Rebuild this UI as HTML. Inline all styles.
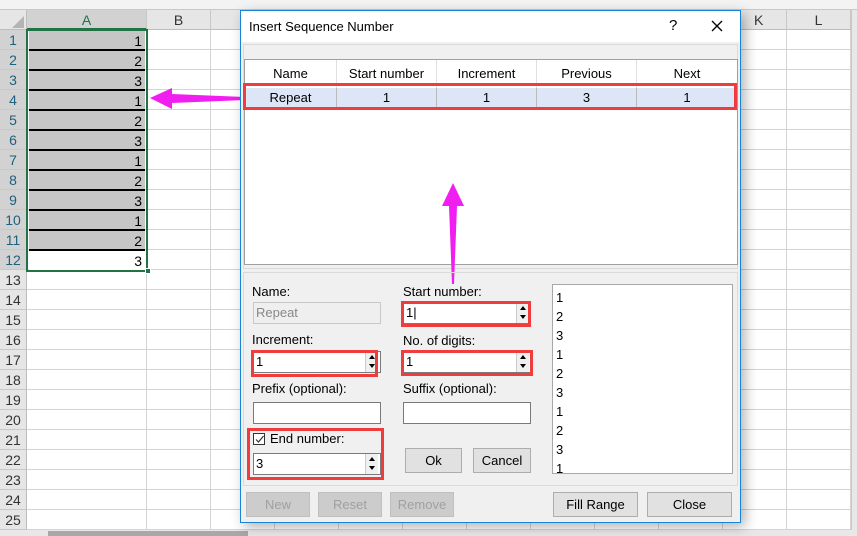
<!DOCTYPE html>
<html><head><meta charset="utf-8"><style>
*{margin:0;padding:0;box-sizing:border-box}
body{width:857px;height:536px;overflow:hidden;background:#fff;font-family:"Liberation Sans",sans-serif;font-size:13px;color:#000;position:relative}
.a{position:absolute}
.gh{left:27px;top:30px;width:830px;height:506px;background:repeating-linear-gradient(to bottom,transparent 0 19px,#d4d4d4 19px 20px)}
.gv{left:146px;top:10px;width:711px;height:526px;background:repeating-linear-gradient(to right,#d4d4d4 0 1px,transparent 1px 64px)}
.rh{left:0;width:27px;height:20px;background:#e6e6e6;border-bottom:1px solid #c8c8c8;border-right:1px solid #bdbdbd;text-align:center;line-height:20px;color:#333;font-size:14px}
.rh.s{background:#d2d2d2;color:#1f5f7f}
.cell{left:29px;width:116px;height:20px;background:#c6c6c6;border-bottom:2px solid #000;text-align:right;padding-right:3px;line-height:20px;font-size:14px}
.ch{top:10px;height:20px;background:#e6e6e6;border-right:1px solid #c8c8c8;border-bottom:1px solid #bdbdbd;text-align:center;line-height:20px;font-size:14px;color:#333}
.dlg{left:240px;top:10px;width:501px;height:513px;background:#f0f0f0;border:1px solid #1883d7;box-shadow:4px 4px 12px rgba(0,0,0,.3)}
.lbl{font-size:13px}
.inp{background:#fff;border:1px solid #7a7a7a;height:22px;font-size:13px;line-height:20px;padding-left:2px}
.spin{width:13px;height:20px;border-left:1px solid #ccc;background:#f0f0f0}
.spin:before{content:"";position:absolute;left:3px;top:3px;border-left:3.5px solid transparent;border-right:3.5px solid transparent;border-bottom:4px solid #000}
.spin:after{content:"";position:absolute;left:3px;top:12px;border-left:3.5px solid transparent;border-right:3.5px solid transparent;border-top:4px solid #000}
.red{border:3px solid #f03c3c}
.btn{background:#e1e1e1;border:1px solid #adadad;text-align:center;font-size:13px;height:25px;line-height:23px}
.dis{color:#a0a0a0;background:#cccccc;border-color:#bfbfbf}
.th{top:0;height:28px;line-height:28px;text-align:center;border-right:1px solid #e0e0e0}
.td{top:0;height:20px;line-height:20px;text-align:center;border-right:1px solid #bbb}
</style></head><body>
<div class="a" style="left:0;top:0;width:857px;height:10px;background:#f3f3f3;border-bottom:1px solid #c8c8c8"></div>
<div class="a gh"></div>
<div class="a gv"></div>
<div class="a" style="left:0;top:10px;width:27px;height:20px;background:#e6e6e6;border-right:1px solid #bdbdbd;border-bottom:1px solid #bdbdbd"></div>
<svg class="a" style="left:12px;top:16px" width="12" height="12"><polygon points="12,0 12,12 0,12" fill="#b4b4b4"/></svg>
<div class="a ch" style="left:27px;width:120px;background:#d2d2d2;color:#217346;border-bottom:2px solid #217346">A</div>
<div class="a ch" style="left:147px;width:64px">B</div>
<div class="a ch" style="left:211px;width:64px"></div>
<div class="a ch" style="left:741px;width:46px;text-align:left;padding-left:13px">K</div>
<div class="a ch" style="left:787px;width:64px">L</div>
<div class="a" style="left:851px;top:10px;width:6px;height:526px;background:#e8e8e8;border-left:1px solid #c8c8c8"></div>
<div class="a" style="left:0;top:530px;width:857px;height:6px;background:#e8e8e8"></div>
<div class="a" style="left:48px;top:531px;width:200px;height:5px;background:#a8a8a8"></div>
<div class="a rh s" style="top:30px">1</div><div class="a rh s" style="top:50px">2</div><div class="a rh s" style="top:70px">3</div><div class="a rh s" style="top:90px">4</div><div class="a rh s" style="top:110px">5</div><div class="a rh s" style="top:130px">6</div><div class="a rh s" style="top:150px">7</div><div class="a rh s" style="top:170px">8</div><div class="a rh s" style="top:190px">9</div><div class="a rh s" style="top:210px">10</div><div class="a rh s" style="top:230px">11</div><div class="a rh s" style="top:250px">12</div>
<div class="a rh" style="top:270px">13</div><div class="a rh" style="top:290px">14</div><div class="a rh" style="top:310px">15</div><div class="a rh" style="top:330px">16</div><div class="a rh" style="top:350px">17</div><div class="a rh" style="top:370px">18</div><div class="a rh" style="top:390px">19</div><div class="a rh" style="top:410px">20</div><div class="a rh" style="top:430px">21</div><div class="a rh" style="top:450px">22</div><div class="a rh" style="top:470px">23</div><div class="a rh" style="top:490px">24</div><div class="a rh" style="top:510px">25</div>
<div class="a cell" style="top:31px">1</div><div class="a cell" style="top:51px">2</div><div class="a cell" style="top:71px">3</div><div class="a cell" style="top:91px">1</div><div class="a cell" style="top:111px">2</div><div class="a cell" style="top:131px">3</div><div class="a cell" style="top:151px">1</div><div class="a cell" style="top:171px">2</div><div class="a cell" style="top:191px">3</div><div class="a cell" style="top:211px">1</div><div class="a cell" style="top:231px">2</div>
<div class="a cell" style="top:251px;background:#fff;border:none">3</div>
<div class="a" style="left:26px;top:29px;width:122px;height:243px;border:2px solid #217346"></div>
<div class="a" style="left:145px;top:268px;width:6px;height:6px;background:#217346;border:1px solid #fff"></div>
<svg class="a" style="left:0;top:0" width="857" height="536"><polygon points="150,98 172,88 172,94 245,97 245,100 172,103 172,109" fill="#f01ef0"/></svg>
<div class="a dlg">
 <div class="a" style="left:0;top:0;width:499px;height:31px;background:#fff"></div>
 <div class="a" style="left:8px;top:8px;font-size:13px">Insert Sequence Number</div>
 <div class="a" style="left:428px;top:6px;font-size:15px">?</div>
 <svg class="a" style="left:470px;top:9px" width="12" height="12"><path d="M1 1L11 11M11 1L1 11" stroke="#000" stroke-width="1.3"/></svg>
 <div class="a" style="left:2px;top:33px;width:495px;height:225px;border:1px solid #dadada"></div>
 <div class="a" style="left:3px;top:48px;width:494px;height:206px;background:#fff;border:1px solid #a0a0a0">
  <div class="a th" style="left:0;width:92px">Name</div>
  <div class="a th" style="left:92px;width:100px">Start number</div>
  <div class="a th" style="left:192px;width:100px">Increment</div>
  <div class="a th" style="left:292px;width:100px">Previous</div>
  <div class="a th" style="left:392px;width:100px;border:none">Next</div>
  <div class="a" style="left:0;top:28px;width:492px;height:20px;background:#dce6f7">
   <div class="a td" style="left:0;width:92px">Repeat</div>
   <div class="a td" style="left:92px;width:100px">1</div>
   <div class="a td" style="left:192px;width:100px">1</div>
   <div class="a td" style="left:292px;width:100px">3</div>
   <div class="a td" style="left:392px;width:100px;border:none">1</div>
  </div>
 </div>
 <div class="a red" style="left:2px;top:72px;width:494px;height:27px"></div>
 <svg class="a" style="left:0;top:0" width="500" height="300"><polygon points="212,172 223,195 216,195 213,273 211,273 208,195 201,195" fill="#f01ef0"/></svg>
 <div class="a" style="left:2px;top:261px;width:495px;height:214px;border:1px solid #dadada"></div>
 <div class="a lbl" style="left:11px;top:273px">Name:</div>
 <div class="a inp" style="left:12px;top:291px;width:128px;background:#efefef;border-color:#c8c8c8;color:#888">Repeat</div>
 <div class="a lbl" style="left:11px;top:321px">Increment:</div>
 <div class="a inp" style="left:12px;top:340px;width:128px">1</div><div class="a spin" style="left:124px;top:341px"></div>
 <div class="a red" style="left:10px;top:339px;width:127px;height:27px"></div>
 <div class="a lbl" style="left:11px;top:370px">Prefix (optional):</div>
 <div class="a inp" style="left:12px;top:391px;width:128px"></div>
 <div class="a" style="left:12px;top:422px;width:12px;height:12px;border:1px solid #333;background:#fff"></div>
 <svg class="a" style="left:13px;top:423px" width="11" height="11"><path d="M2 5.5L4.5 8L9.5 2" stroke="#333" fill="none" stroke-width="1.2"/></svg>
 <div class="a lbl" style="left:29px;top:420px">End number:</div>
 <div class="a inp" style="left:12px;top:442px;width:128px">3</div><div class="a spin" style="left:124px;top:443px"></div>
 <div class="a red" style="left:6px;top:417px;width:137px;height:52px"></div>
 <div class="a lbl" style="left:162px;top:273px">Start number:</div>
 <div class="a inp" style="left:162px;top:291px;width:128px">1|</div><div class="a spin" style="left:275px;top:292px"></div>
 <div class="a red" style="left:160px;top:290px;width:130px;height:26px"></div>
 <div class="a lbl" style="left:162px;top:322px">No. of digits:</div>
 <div class="a inp" style="left:162px;top:340px;width:128px">1</div><div class="a spin" style="left:275px;top:341px"></div>
 <div class="a red" style="left:160px;top:339px;width:132px;height:26px"></div>
 <div class="a lbl" style="left:162px;top:370px">Suffix (optional):</div>
 <div class="a inp" style="left:162px;top:391px;width:128px"></div>
 <div class="a btn" style="left:164px;top:437px;width:57px">Ok</div>
 <div class="a btn" style="left:232px;top:437px;width:58px">Cancel</div>
 <div class="a" style="left:311px;top:273px;width:181px;height:190px;background:#fff;border:1px solid #a8a8a8;padding:3px 0 0 3px;line-height:19px;overflow:hidden">1<br>2<br>3<br>1<br>2<br>3<br>1<br>2<br>3<br>1</div>
 <div class="a btn dis" style="left:5px;top:481px;width:64px">New</div>
 <div class="a btn dis" style="left:77px;top:481px;width:64px">Reset</div>
 <div class="a btn dis" style="left:149px;top:481px;width:64px">Remove</div>
 <div class="a btn" style="left:312px;top:481px;width:85px">Fill Range</div>
 <div class="a btn" style="left:406px;top:481px;width:85px">Close</div>
</div>
</body></html>
